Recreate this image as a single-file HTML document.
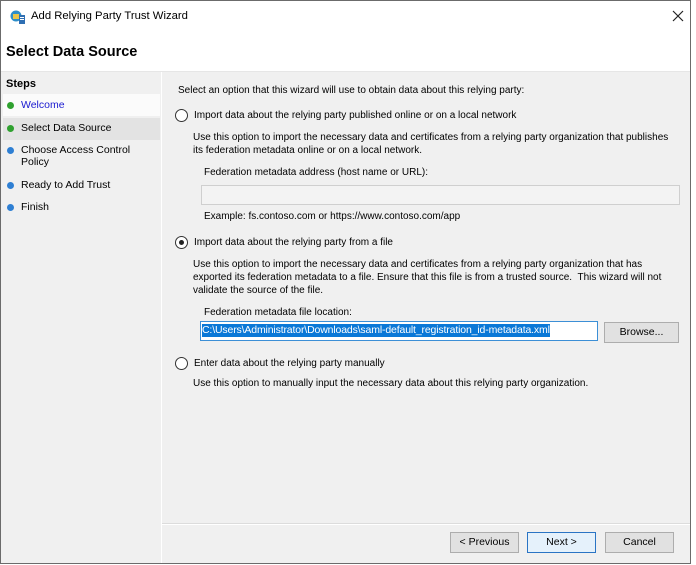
<!DOCTYPE html>
<html><head><style>
body{margin:0;width:696px;height:565px;background:#fff;font-family:"Liberation Sans",sans-serif;font-size:10px;color:#000;position:relative;overflow:hidden}
.a{position:absolute;white-space:nowrap}
.win{position:absolute;left:0;top:0;width:689px;height:562px;border:1px solid #6b6b6b;background:#f0f0f0}
.btn{position:absolute;height:19px;border:1px solid #adadad;background:#e1e1e1;text-align:center;line-height:19px;font-size:10.5px}
.dot{position:absolute;width:7px;height:7px;border-radius:50%}
.radio{position:absolute;width:11px;height:11px;border:1px solid #333;border-radius:50%;background:#fff}
</style></head><body>
<div class="win">
 <div class="a" style="left:0;top:0;width:689px;height:70px;background:#fff"></div>
 <svg class="a" style="left:9px;top:8px" width="16" height="16"><circle cx="6" cy="7" r="5.5" fill="#2d8ec9"/><path d="M3 5h6v5H3z" fill="#e9c54b"/><rect x="9" y="6" width="6" height="9" fill="#2f6fb3"/><rect x="10" y="8" width="4" height="1" fill="#fff"/><rect x="10" y="10" width="4" height="1" fill="#fff"/></svg>
 <div class="a" style="left:30px;top:9px;font-size:11.3px">Add Relying Party Trust Wizard</div>
 <svg class="a" style="left:671px;top:9px" width="12" height="12"><path d="M1 1L11 11M11 1L1 11" stroke="#222" stroke-width="1.2"/></svg>
 <div class="a" style="left:5px;top:43px;font-size:14.5px;font-weight:bold">Select Data Source</div>
 <div class="a" style="left:0;top:71px;width:160px;height:491px;background:#f0f0f0;border-right:1px solid #fff"></div>
 <div class="a" style="left:0;top:70px;width:689px;height:1px;background:#e6e6e6"></div>
 <div class="a" style="left:5px;top:77px;font-weight:bold;font-size:11px">Steps</div>
 <div class="a" style="left:2px;top:93px;width:157px;height:22px;background:#fbfbfb"></div>
 <div class="a" style="left:2px;top:117px;width:157px;height:22px;background:#e3e3e3"></div>
 <div class="dot" style="left:6px;top:101px;background:#2fa12f"></div><div class="a" style="left:20px;top:98px;color:#1a1ad0;font-size:10.5px">Welcome</div>
 <div class="dot" style="left:6px;top:124px;background:#2fa12f"></div><div class="a" style="left:20px;top:121px;font-size:10.5px">Select Data Source</div>
 <div class="dot" style="left:6px;top:146px;background:#2e7fd3"></div><div class="a" style="left:20px;top:143px;line-height:12px;font-size:10.5px">Choose Access Control<br>Policy</div>
 <div class="dot" style="left:6px;top:181px;background:#2e7fd3"></div><div class="a" style="left:20px;top:178px;font-size:10.5px">Ready to Add Trust</div>
 <div class="dot" style="left:6px;top:203px;background:#2e7fd3"></div><div class="a" style="left:20px;top:200px;font-size:10.5px">Finish</div>

 <div class="a" style="left:177px;top:84px">Select an option that this wizard will use to obtain data about this relying party:</div>
 <div class="radio" style="left:174px;top:108px"></div>
 <div class="a" style="left:193px;top:109px">Import data about the relying party published online or on a local network</div>
 <div class="a" style="left:192px;top:130px;line-height:13px">Use this option to import the necessary data and certificates from a relying party organization that publishes<br>its federation metadata online or on a local network.</div>
 <div class="a" style="left:203px;top:166px">Federation metadata address (host name or URL):</div>
 <div class="a" style="left:200px;top:184px;width:477px;height:18px;border:1px solid #cfcfcf;background:#f3f3f3"></div>
 <div class="a" style="left:203px;top:210px">Example: fs.contoso.com or https://www.contoso.com/app</div>
 <div class="radio" style="left:174px;top:235px"></div>
 <div class="dot" style="left:178px;top:239px;width:5px;height:5px;background:#222"></div>
 <div class="a" style="left:193px;top:236px">Import data about the relying party from a file</div>
 <div class="a" style="left:192px;top:257px;line-height:13px">Use this option to import the necessary data and certificates from a relying party organization that has<br>exported its federation metadata to a file. Ensure that this file is from a trusted source.&nbsp; This wizard will not<br>validate the source of the file.</div>
 <div class="a" style="left:203px;top:306px">Federation metadata file location:</div>
 <div class="a" style="left:199px;top:320px;width:396px;height:18px;border:1px solid #3c8fd6;background:#fff"></div>
 <div class="a" style="left:201px;top:323px;height:13px;background:#0a78d7;color:#fff;line-height:13px;font-size:10.5px;letter-spacing:-0.15px">C:\Users\Administrator\Downloads\saml-default_registration_id-metadata.xml</div>
 <div class="btn" style="left:603px;top:321px;width:73px">Browse...</div>
 <div class="radio" style="left:174px;top:356px"></div>
 <div class="a" style="left:193px;top:357px">Enter data about the relying party manually</div>
 <div class="a" style="left:192px;top:377px">Use this option to manually input the necessary data about this relying party organization.</div>

 <div class="a" style="left:161px;top:522px;width:528px;height:1px;background:#dcdcdc"></div>
 <div class="a" style="left:161px;top:523px;width:528px;height:1px;background:#fff"></div>
 <div class="btn" style="left:449px;top:531px;width:67px">&lt; Previous</div>
 <div class="btn" style="left:526px;top:531px;width:67px;border:1px solid #2a74c4;background:#e5f1fb">Next &gt;</div>
 <div class="btn" style="left:604px;top:531px;width:67px">Cancel</div>
</div>
</body></html>
